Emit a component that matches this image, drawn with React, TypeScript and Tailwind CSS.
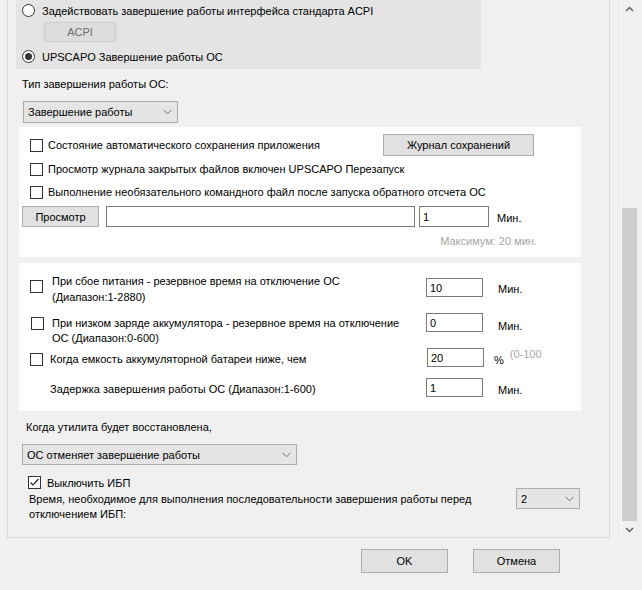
import React from "react";

function Chevron({ className = "" }: { className?: string }) {
  return (
    <svg width="9" height="6" viewBox="0 0 9 6" className={className}>
      <path d="M0.5 0.8 L4.5 4.8 L8.5 0.8" fill="none" stroke="#707070" strokeWidth="1" />
    </svg>
  );
}

function Radio({ checked }: { checked?: boolean }) {
  return (
    <span className="w-[13px] h-[13px] rounded-full border border-[#333333] bg-white flex items-center justify-center shrink-0">
      {checked && <span className="w-[7px] h-[7px] rounded-full bg-[#333333]" />}
    </span>
  );
}

function Check({ checked, className = "" }: { checked?: boolean; className?: string }) {
  return (
    <span className={`w-[13px] h-[13px] border border-[#333333] bg-white shrink-0 flex items-center justify-center ${className}`}>
      {checked && (
        <svg width="11" height="11" viewBox="0 0 11 11">
          <path d="M1.5 5.5 L4 8 L9.5 2" fill="none" stroke="#222222" strokeWidth="1.2" />
        </svg>
      )}
    </span>
  );
}

function Select({ value, className }: { value: string; className: string }) {
  return (
    <div className={`flex items-center justify-between bg-[#e5e5e5] border border-[#adadad] pl-[4px] pr-[5px] ${className}`}>
      <span>{value}</span>
      <Chevron />
    </div>
  );
}

function Field({ value, className }: { value: string; className: string }) {
  return (
    <div className={`bg-white border border-[#7a7a7a] pl-[3px] flex items-center ${className}`}>{value}</div>
  );
}

export default function App() {
  return (
    <div className="w-[642px] h-[590px] bg-[#f0f0f0] overflow-hidden text-[11px] text-black font-['Liberation_Sans',Arial,sans-serif] leading-[14px]">
      <div className="flex h-[538px]">
        {/* main settings panel */}
        <div className="ml-[7px] w-[603px] h-full border-l border-r border-b border-[#d8d8d8] flex flex-col">
          {/* shutdown mode group */}
          <div className="ml-[8px] w-[465px] h-[69px] bg-[#e4e4e4] flex flex-col pt-[4px]">
            <div className="flex items-center h-[13px] ml-[6px]">
              <Radio />
              <span className="ml-[7px]">Задействовать завершение работы интерфейса стандарта ACPI</span>
            </div>
            <div className="ml-[28px] mt-[5px] w-[72px] h-[20px] bg-[#dcdcdc] border border-[#cccccc] text-[#6d6d6d] flex items-center justify-center">
              ACPI
            </div>
            <div className="flex items-center h-[13px] ml-[6px] mt-[8px]">
              <Radio checked />
              <span className="ml-[7px]">UPSCAPO Завершение работы ОС</span>
            </div>
          </div>

          <div className="ml-[14px] mt-[8px]">Тип завершения работы ОС:</div>
          <Select value="Завершение работы" className="ml-[15px] mt-[10px] w-[155px] h-[22px]" />

          {/* panel 1 */}
          <div className="ml-[11px] mt-[4px] w-[562px] h-[130px] bg-white flex flex-col pt-[7px]">
            <div className="flex items-center h-[22px]">
              <Check className="ml-[11px]" />
              <span className="ml-[5px] w-[335px]">Состояние автоматического сохранения приложения</span>
              <div className="w-[151px] h-[22px] bg-[#e1e1e1] border border-[#adadad] flex items-center justify-center">
                Журнал сохранений
              </div>
            </div>
            <div className="flex items-center h-[22px] mt-[2px]">
              <Check className="ml-[11px]" />
              <span className="ml-[5px]">Просмотр журнала закрытых файлов включен UPSCAPO Перезапуск</span>
            </div>
            <div className="flex items-center h-[22px] mt-[1px]">
              <Check className="ml-[11px]" />
              <span className="ml-[5px]">Выполнение необязательного командного файл после запуска обратного отсчета ОС</span>
            </div>
            <div className="flex items-center h-[21px] mt-[3px]">
              <div className="ml-[3px] w-[77px] h-[21px] bg-[#e1e1e1] border border-[#adadad] flex items-center justify-center">
                Просмотр
              </div>
              <Field value="" className="ml-[7px] w-[309px] h-[21px]" />
              <Field value="1" className="ml-[4px] w-[70px] h-[21px]" />
              <span className="ml-[8px] mt-[2px]">Мин.</span>
            </div>
            <div className="mt-[7px] pr-[44px] text-right text-[#a6a6a6]">Максимум: 20 мин.</div>
          </div>

          {/* panel 2 */}
          <div className="ml-[11px] mt-[6px] w-[562px] h-[148px] bg-white flex flex-col pt-[10px]">
            <div className="flex items-start h-[40px]">
              <Check className="ml-[11px] mt-[7px]" />
              <div className="ml-[9px] w-[365px] leading-[16px]">
                <span className="whitespace-nowrap">При сбое питания - резервное время на отключение ОС</span>
                <br />
                (Диапазон:1-2880)
              </div>
              <Field value="10" className="ml-[9px] mt-[5px] w-[57px] h-[19px]" />
              <span className="ml-[15px] mt-[9px]">Мин.</span>
            </div>
            <div className="flex items-start h-[35px]">
              <Check className="ml-[12px] mt-[4px]" />
              <div className="ml-[8px] mt-[3px] w-[365px] leading-[15px]">
                <span className="whitespace-nowrap">При низком заряде аккумулятора - резервное время на отключение</span>
                <br />
                ОС (Диапазон:0-600)
              </div>
              <Field value="0" className="ml-[9px] w-[57px] h-[19px]" />
              <span className="ml-[15px] mt-[6px]">Мин.</span>
            </div>
            <div className="flex items-start h-[30px]">
              <Check className="ml-[11px] mt-[5px]" />
              <div className="ml-[7px] mt-[4px] w-[377px]">Когда емкость аккумуляторной батареи ниже, чем</div>
              <Field value="20" className="w-[57px] h-[19px]" />
              <span className="ml-[10px] mt-[5px]">%</span>
              <span className="ml-[6px] -mt-[1px] text-[#a6a6a6]">(0-100</span>
            </div>
            <div className="flex items-start">
              <div className="ml-[31px] mt-[4px] w-[376px]">Задержка завершения работы ОС (Диапазон:1-600)</div>
              <Field value="1" className="w-[57px] h-[19px]" />
              <span className="ml-[15px] mt-[5px]">Мин.</span>
            </div>
          </div>

          <div className="ml-[18px] mt-[9px]">Когда утилита будет восстановлена,</div>
          <Select value="ОС отменяет завершение работы" className="ml-[14px] mt-[10px] w-[275px] h-[21px]" />
          <div className="flex items-center ml-[20px] mt-[11px] h-[13px]">
            <Check checked />
            <span className="ml-[6px]">Выключить ИБП</span>
          </div>
          <div className="flex items-start mt-[3px]">
            <div className="ml-[21px] w-[487px] leading-[15px]">
              <span className="whitespace-nowrap">Время, необходимое для выполнения последовательности завершения работы перед</span>
              <br />
              отключением ИБП:
            </div>
            <Select value="2" className="-mt-[4px] w-[64px] h-[21px]" />
          </div>
        </div>

        {/* scrollbar */}
        <div className="ml-[11px] w-[21px] h-full border-l border-[#f8f8f8] flex flex-col items-start">
          <div className="w-[15px] h-[17px] flex items-center justify-center">
            <svg width="9" height="6" viewBox="0 0 9 6">
              <path d="M1 5 L4.5 1.5 L8 5" fill="none" stroke="#606060" strokeWidth="1.5" />
            </svg>
          </div>
          <div className="w-[15px] flex-1 flex flex-col">
            <div className="h-[191px]" />
            <div className="flex-1 bg-[#cdcdcd]" />
          </div>
          <div className="w-[15px] h-[17px] flex items-center justify-center">
            <svg width="9" height="6" viewBox="0 0 9 6">
              <path d="M1 1 L4.5 4.5 L8 1" fill="none" stroke="#606060" strokeWidth="1.5" />
            </svg>
          </div>
        </div>
      </div>

      {/* dialog buttons */}
      <div className="flex gap-[25px] pl-[361px] mt-[11px]">
        <div className="w-[87px] h-[24px] bg-[#e1e1e1] border border-[#adadad] flex items-center justify-center">OK</div>
        <div className="w-[87px] h-[24px] bg-[#e1e1e1] border border-[#adadad] flex items-center justify-center">Отмена</div>
      </div>
    </div>
  );
}
